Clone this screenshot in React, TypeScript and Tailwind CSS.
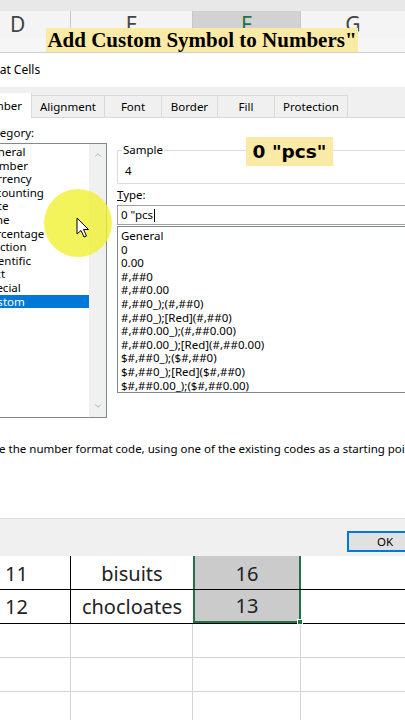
import { ChevronDown, ChevronUp } from "lucide-react"

const CATEGORIES = [
  "General",
  "Number",
  "Currency",
  "Accounting",
  "Date",
  "Time",
  "Percentage",
  "Fraction",
  "Scientific",
  "Text",
  "Special",
  "Custom",
]

const FORMAT_CODES = [
  "General",
  "0",
  "0.00",
  "#,##0",
  "#,##0.00",
  "#,##0_);(#,##0)",
  "#,##0_);[Red](#,##0)",
  "#,##0.00_);(#,##0.00)",
  "#,##0.00_);[Red](#,##0.00)",
  "$#,##0_);($#,##0)",
  "$#,##0_);[Red]($#,##0)",
  "$#,##0.00_);($#,##0.00)",
]

const TABS = [
  { label: "Alignment", width: "w-[73px]" },
  { label: "Font", width: "w-[57px]" },
  { label: "Border", width: "w-[56px]" },
  { label: "Fill", width: "w-[57px]" },
  { label: "Protection", width: "w-[73px]" },
]

function ColumnHeaders() {
  return (
    <div className="h-[38px] bg-[#e8e8e8] pt-[8px] border-b border-[#c6c6c6]">
      <div className="flex h-[30px] pt-[3px] text-[21px] leading-[27px] text-[#444]">
        <div className="w-[71px] shrink-0 border-r border-[#c8c8c8] bg-[#f4f4f4] pl-[10px]">D</div>
        <div className="w-[122px] shrink-0 border-r border-[#c8c8c8] bg-[#f4f4f4] text-center">E</div>
        <div className="w-[108px] shrink-0 border-r border-[#c8c8c8] bg-[#d2d2d2] text-center text-[#217346]">F</div>
        <div className="flex-1 bg-[#f4f4f4] text-center">G</div>
      </div>
    </div>
  )
}

function CategoryList() {
  return (
    <div className="w-[107px] shrink-0 overflow-hidden">
      <div className="mt-[7px] h-[16px] -ml-[18px] whitespace-nowrap leading-[16px]">Category:</div>
      <div className="mt-[2px] -ml-[22px] flex h-[275px] border border-[#828790] bg-white">
        <div className="flex-1 pt-[1px]">
          {CATEGORIES.map((name) => (
            <div
              key={name}
              className={
                name === "Custom"
                  ? "h-[13.6px] whitespace-nowrap bg-[#0078d7] pl-[4px] leading-[13.6px] text-white"
                  : "h-[13.6px] whitespace-nowrap pl-[4px] leading-[13.6px]"
              }
            >
              {name}
            </div>
          ))}
        </div>
        <div className="flex w-[17px] flex-col items-center justify-between bg-[#f0f0f0] py-[6px] text-[#a6a6a6]">
          <ChevronUp className="h-[10px] w-[10px]" strokeWidth={2} />
          <ChevronDown className="h-[10px] w-[10px]" strokeWidth={2} />
        </div>
      </div>
    </div>
  )
}

function TypePanel() {
  return (
    <div className="ml-[10px] w-[300px] shrink-0 pt-[25px]">
      <fieldset className="h-[41px] border border-[#dcdcdc] px-[7px]">
        <legend className="ml-[-3px] px-[1px] leading-[14px]">Sample</legend>
        <div className="pt-[7px] leading-[14px]">4</div>
      </fieldset>
      <div className="mt-[4px] h-[14px] leading-[14px]">
        <span className="underline">T</span>ype:
      </div>
      <div className="mt-[3px] flex h-[20px] items-center border border-[#a0a0a0] pl-[3px]">
        <span className="leading-[14px]">0 "pcs</span>
        <span className="ml-[1px] h-[13px] w-px bg-black" />
      </div>
      <div className="mt-[1px] h-[167px] border border-[#828790] pl-[3px] pt-[2px]">
        {FORMAT_CODES.map((code) => (
          <div key={code} className="h-[13.6px] whitespace-nowrap leading-[13.6px]">
            {code}
          </div>
        ))}
      </div>
    </div>
  )
}

function FormatCellsDialog() {
  return (
    <div className="h-[503px] overflow-hidden bg-white font-['Noto_Sans',sans-serif] text-[11.5px] text-black">
      <div className="flex h-[34px] items-center whitespace-nowrap text-[12px]">
        <span className="-ml-[30px]">Format Cells</span>
      </div>
      <div className="flex h-[31px] items-end bg-[#f0f0f0]">
        <div className="flex h-[25px] w-[32px] shrink-0 items-center justify-end overflow-hidden whitespace-nowrap border-r border-[#d9d9d9] bg-white pr-[9px]">
          Number
        </div>
        {TABS.map((tab) => (
          <div
            key={tab.label}
            className={`${tab.width} flex h-[23px] shrink-0 items-center justify-center border-r border-t border-b border-[#d9d9d9]`}
          >
            {tab.label}
          </div>
        ))}
        <div className="h-full flex-1 border-b border-[#d9d9d9]" />
      </div>
      <div className="h-[400px]">
        <div className="flex h-[300px]">
          <CategoryList />
          <TypePanel />
        </div>
        <div className="mt-[24px] -ml-[20px] h-[14px] whitespace-nowrap leading-[14px]">
          Type the number format code, using one of the existing codes as a starting point.
        </div>
      </div>
      <div className="flex h-[38px] border-t border-[#dfdfdf] bg-[#f0f0f0] pt-[12px]">
        <div className="ml-[347px] flex h-[21px] w-[76px] shrink-0 items-center justify-center border-2 border-[#0078d7] bg-[#e1e1e1]">
          OK
        </div>
      </div>
    </div>
  )
}

function SheetRows() {
  return (
    <div className="font-['Noto_Sans',sans-serif] text-[20px] text-[#222]">
      <div className="flex h-[34px] border-b border-black pt-[3px] leading-[30px]">
        <div className="-mt-[3px] w-[71px] shrink-0 border-r border-black pl-[5px] pt-[3px]">11</div>
        <div className="w-[122px] shrink-0 text-center">bisuits</div>
        <div className="-mt-[3px] w-[108px] shrink-0 border-x-2 border-[#217346] bg-[#cbcbcb] pt-[3px] text-center">16</div>
        <div className="flex-1" />
      </div>
      <div className="flex h-[34px] border-b border-black leading-[34px]">
        <div className="w-[71px] shrink-0 border-r border-black pl-[5px]">12</div>
        <div className="w-[122px] shrink-0 text-center">chocloates</div>
        <div className="relative w-[108px] shrink-0 border-x-2 border-b-2 border-[#217346] bg-[#cbcbcb] text-center leading-[32px]">
          13
          <span className="absolute -right-[4px] -bottom-[4px] h-[6px] w-[6px] border border-white bg-[#217346]" />
        </div>
        <div className="flex-1" />
      </div>
      {[0, 1, 2].map((i) => (
        <div key={i} className="flex h-[34px] border-b border-[#d4d4d4]">
          <div className="w-[71px] shrink-0 border-r border-[#d4d4d4]" />
          <div className="w-[122px] shrink-0 border-r border-[#d4d4d4]" />
          <div className="w-[108px] shrink-0 border-r border-[#d4d4d4]" />
          <div className="flex-1" />
        </div>
      ))}
    </div>
  )
}

export default function App() {
  return (
    <div className="relative h-[720px] w-[405px] overflow-hidden bg-white font-['Noto_Sans',sans-serif]">
      <ColumnHeaders />
      <div className="h-[15px] border-b border-[#cfcfcf] bg-[#f6f6f6]" />
      <FormatCellsDialog />
      <SheetRows />

      {/* caption overlays */}
      <div className="absolute left-[46px] top-[28px] flex h-[24px] w-[312px] items-center justify-center bg-[#fbe9a6] font-['Liberation_Serif',serif] text-[21px] font-bold leading-[24px] text-black">
        Add Custom Symbol to Numbers"
      </div>
      <div className="absolute left-[246px] top-[137px] flex h-[29px] w-[87px] items-center justify-center bg-[#fbe9a6] font-['DejaVu_Sans',sans-serif] text-[18.5px] font-bold text-black">
        0 "pcs"
      </div>

      {/* cursor highlight */}
      <div className="absolute left-[44px] top-[189px] h-[68px] w-[68px] rounded-full bg-[#f0f032]/80" />
      <svg className="absolute left-[76px] top-[217px]" width="14" height="22" viewBox="0 0 14 22">
        <path d="M1 1 L1 17 L5 13.5 L8 20 L10.5 19 L7.5 12.5 L12.5 12.5 Z" fill="white" stroke="black" strokeWidth="1" strokeLinejoin="round" />
      </svg>
    </div>
  )
}
